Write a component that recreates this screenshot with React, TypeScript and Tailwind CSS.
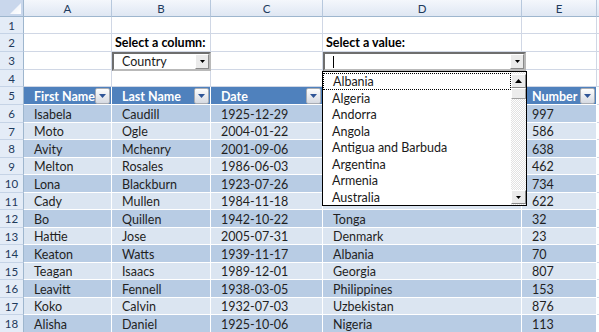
import React from 'react';

type Row = { first: string; last: string; date: string; country: string; num: string };

// country cells of rows 6-10 sit under the open list, so they stay empty here
const people: Row[] = [
  { first: 'Isabela', last: 'Caudill', date: '1925-12-29', country: '', num: '997' },
  { first: 'Moto', last: 'Ogle', date: '2004-01-22', country: '', num: '586' },
  { first: 'Avity', last: 'Mchenry', date: '2001-09-06', country: '', num: '638' },
  { first: 'Melton', last: 'Rosales', date: '1986-06-03', country: '', num: '462' },
  { first: 'Lona', last: 'Blackburn', date: '1923-07-26', country: '', num: '734' },
  { first: 'Cady', last: 'Mullen', date: '1984-11-18', country: 'Dominica', num: '622' },
  { first: 'Bo', last: 'Quillen', date: '1942-10-22', country: 'Tonga', num: '32' },
  { first: 'Hattie', last: 'Jose', date: '2005-07-31', country: 'Denmark', num: '23' },
  { first: 'Keaton', last: 'Watts', date: '1939-11-17', country: 'Albania', num: '70' },
  { first: 'Teagan', last: 'Isaacs', date: '1989-12-01', country: 'Georgia', num: '807' },
  { first: 'Leavitt', last: 'Fennell', date: '1938-03-05', country: 'Philippines', num: '153' },
  { first: 'Koko', last: 'Calvin', date: '1932-07-03', country: 'Uzbekistan', num: '876' },
  { first: 'Alisha', last: 'Daniel', date: '1925-10-06', country: 'Nigeria', num: '113' },
];

const countries = [
  'Albania',
  'Algeria',
  'Andorra',
  'Angola',
  'Antigua and Barbuda',
  'Argentina',
  'Armenia',
  'Australia',
];

const colWidths = ['w-[88px]', 'w-[99px]', 'w-[112px]', 'w-[199px]', 'w-[75px]'];
const letters = ['A', 'B', 'C', 'D', 'E'];
// excel rows alternate 17/18px at this zoom
const rowHeights = [
  'h-[17px]', 'h-[18px]', 'h-[18px]', 'h-[17px]', 'h-[18px]', 'h-[18px]',
  'h-[17px]', 'h-[18px]', 'h-[17px]', 'h-[18px]', 'h-[17px]', 'h-[18px]',
  'h-[17px]', 'h-[18px]', 'h-[17px]', 'h-[18px]', 'h-[17px]', 'h-[18px]',
];

const DownTriangle = ({ color = '#000000' }: { color?: string }) => (
  <svg width="7" height="4" viewBox="0 0 7 4">
    <path d="M0 0h7L3.5 4z" fill={color} />
  </svg>
);

const UpTriangle = () => (
  <svg width="7" height="4" viewBox="0 0 7 4">
    <path d="M0 4h7L3.5 0z" fill="#000000" />
  </svg>
);

const FilterButton = () => (
  <span className="shrink-0 mr-[1px] w-[15px] h-[16px] rounded-[2px] border border-[#a8acb3] bg-gradient-to-b from-[#fdfdfd] to-[#d6dae2] flex items-center justify-center">
    <DownTriangle color="#2f5597" />
  </span>
);

const ComboButton = () => (
  <span className="shrink-0 w-[14px] h-full bg-[#ebebeb] border border-t-white border-l-white border-r-[#8a8a8a] border-b-[#8a8a8a] flex items-center justify-center">
    <svg width="5" height="3" viewBox="0 0 5 3">
      <path d="M0 0h5L2.5 3z" fill="#000000" />
    </svg>
  </span>
);

const RowHeader = ({ n }: { n: number }) => (
  <div className="w-[24px] shrink-0 h-full bg-[#e4ecf7] border-r border-b border-r-[#9eb6ce] border-b-[#c5d3e6] flex items-center justify-center text-[11.5px] text-[#1e3a5c]">
    {n}
  </div>
);

const PlainCell = ({ w, children }: { w: string; children?: React.ReactNode }) => (
  <div className={`${w} shrink-0 h-full border-r border-b border-[#d0d7e5] flex items-end pl-[3px] pb-[1px] overflow-hidden whitespace-nowrap`}>
    {children}
  </div>
);

export default function App() {
  return (
    <div className="relative w-[599px] h-[332px] overflow-hidden bg-white font-['Lato',sans-serif] text-[12.5px] leading-[15px] text-[#1f1f1f] select-none">
      {/* column headers */}
      <div className="flex h-[17px]">
        <div className="w-[24px] shrink-0 h-full bg-[#c9d7ec] border-r border-b border-[#9eb6ce] relative">
          <svg className="absolute right-[2px] bottom-[2px]" width="11" height="11" viewBox="0 0 11 11">
            <defs>
              <linearGradient id="corner" x1="0" y1="0" x2="1" y2="1">
                <stop offset="0" stopColor="#e8eef8" />
                <stop offset="1" stopColor="#ffffff" />
              </linearGradient>
            </defs>
            <path d="M11 0V11H0z" fill="url(#corner)" />
          </svg>
        </div>
        {letters.map((l, i) => (
          <div
            key={l}
            className={`${colWidths[i]} shrink-0 h-full bg-gradient-to-b from-[#f4f7fc] to-[#dfe7f3] border-r border-b border-r-[#b7c8dd] border-b-[#9eb6ce] flex items-center justify-center text-[11.5px] text-[#1e3a5c]`}
          >
            {l}
          </div>
        ))}
        <div className="flex-1 h-full bg-gradient-to-b from-[#f4f7fc] to-[#dfe7f3] border-b border-[#9eb6ce]" />
      </div>

      {/* rows 1-4 */}
      {[1, 2, 3, 4].map((n) => (
        <div key={n} className={`flex ${rowHeights[n - 1]}`}>
          <RowHeader n={n} />
          <PlainCell w={colWidths[0]} />
          <PlainCell w={colWidths[1]}>
            {n === 2 && <span className="font-bold text-black">Select a column:</span>}
          </PlainCell>
          <PlainCell w={colWidths[2]} />
          <PlainCell w={colWidths[3]}>
            {n === 2 && <span className="font-bold text-black">Select a value:</span>}
          </PlainCell>
          <PlainCell w={colWidths[4]} />
          <div className="flex-1 h-full border-b border-[#d0d7e5]" />
        </div>
      ))}

      {/* table header, row 5 (column D is hidden under the list) */}
      <div className={`flex ${rowHeights[4]}`}>
        <RowHeader n={5} />
        {['First Name', 'Last Name', 'Date', '', 'Number'].map((h, i) => (
          <div
            key={i}
            className={`${colWidths[i]} shrink-0 h-full bg-[#4f81bd] border-r border-b border-white flex items-center font-bold text-white`}
          >
            <span className="flex-1 min-w-0 overflow-hidden whitespace-nowrap pl-[10px] pt-[1px]">{h}</span>
            {h && <FilterButton />}
          </div>
        ))}
        <div className="flex-1 h-full border-b border-[#d0d7e5]" />
      </div>

      {/* table body */}
      {people.map((p, r) => {
        const bg = r % 2 === 0 ? 'bg-[#b8cce4]' : 'bg-[#dbe5f1]';
        const vals = [p.first, p.last, p.date, p.country, p.num];
        return (
          <div key={p.first} className={`flex ${rowHeights[5 + r]}`}>
            <RowHeader n={6 + r} />
            {vals.map((v, i) => (
              <div
                key={i}
                className={`${colWidths[i]} ${bg} shrink-0 h-full border-r border-b border-white flex items-end pl-[10px] overflow-hidden whitespace-nowrap`}
              >
                {v}
              </div>
            ))}
            <div className="flex-1 h-full border-b border-[#d0d7e5]" />
          </div>
        );
      })}

      {/* combo box: column */}
      <div className="absolute left-[112px] top-[52px] w-[99px] h-[19px] bg-white border-2 border-t-[#6e6e6e] border-l-[#6e6e6e] border-r-[#b9b9b9] border-b-[#b9b9b9] flex items-center">
        <span className="flex-1 pl-[8px] text-[#1a1a1a]">Country</span>
        <ComboButton />
      </div>

      {/* combo box: value */}
      <div className="absolute left-[323px] top-[52px] w-[203px] h-[19px] bg-white border-2 border-t-[#6e6e6e] border-l-[#6e6e6e] border-r-[#b9b9b9] border-b-[#b9b9b9] flex items-center">
        <span className="flex-1 pl-[8px] flex items-center">
          <span className="w-[1px] h-[12px] bg-black" />
        </span>
        <ComboButton />
      </div>

      {/* open dropdown list */}
      <div className="absolute left-[322px] top-[71px] w-[205px] h-[135px] bg-white border border-black flex">
        <div className="flex-1 flex flex-col pt-[1px]">
          {countries.map((c, i) => (
            <div
              key={c}
              className={`h-[16.5px] shrink-0 flex items-center pl-[9px] pt-[1px] whitespace-nowrap text-[#1a1a1a] ${
                i === 0 ? 'border border-dotted border-black pl-[8px]' : ''
              }`}
            >
              {c}
            </div>
          ))}
        </div>
        <div className="w-[15px] shrink-0 flex flex-col bg-[repeating-conic-gradient(#ffffff_0%_25%,#e2e2e2_0%_50%)] bg-[length:2px_2px]">
          <span className="mt-[2px] h-[14px] shrink-0 bg-[#ebebeb] border border-t-white border-l-white border-r-[#8a8a8a] border-b-[#8a8a8a] flex items-center justify-center">
            <UpTriangle />
          </span>
          <span className="h-[11px] shrink-0 bg-[#ececec] border border-t-white border-l-white border-r-[#a0a0a0] border-b-[#a0a0a0]" />
          <span className="flex-1" />
          <span className="mb-[1px] h-[14px] shrink-0 bg-[#ebebeb] border border-t-white border-l-white border-r-[#8a8a8a] border-b-[#8a8a8a] flex items-center justify-center">
            <svg width="5" height="3" viewBox="0 0 5 3">
              <path d="M0 0h5L2.5 3z" fill="#000000" />
            </svg>
          </span>
        </div>
      </div>
    </div>
  );
}
